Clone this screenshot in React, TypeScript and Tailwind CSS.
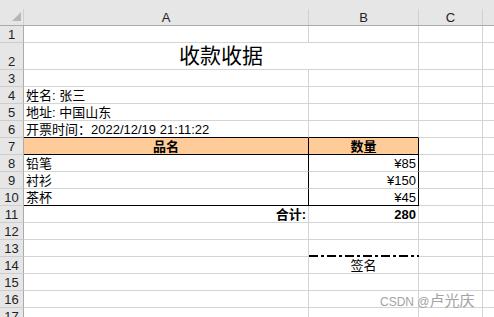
import React from 'react';

const font = { fontFamily: '"Liberation Sans", "Noto Sans CJK SC", sans-serif' };

type RowDef = {
  n: number;
  h?: string;
  a?: React.ReactNode;
  b?: React.ReactNode;
  aCls?: string;
  bCls?: string;
  merged?: boolean;
};

const DashDot = () => (
  <svg width="110" height="2" className="block shrink-0">
    <line x1="0" y1="1" x2="110" y2="1" stroke="#000" strokeWidth="2" strokeDasharray="9 3 3 3" />
  </svg>
);

const rows: RowDef[] = [
  { n: 1 },
  {
    n: 2,
    h: 'h-[27px]',
    merged: true,
    a: <span className="text-[21px] leading-[24px]">收款收据</span>,
  },
  { n: 3 },
  { n: 4, a: <span>姓名: 张三</span> },
  { n: 5, a: <span>地址: 中国山东</span> },
  {
    n: 6,
    a: <span>开票时间：2022/12/19 21:11:22</span>,
    aCls: 'border-b-black',
    bCls: 'border-b-black',
  },
  {
    n: 7,
    a: <span className="font-bold">品名</span>,
    b: <span className="font-bold">数量</span>,
    aCls: 'justify-center bg-[#ffcc99] border-r-black border-b-black',
    bCls: 'justify-center bg-[#ffcc99] border-r-black border-b-black',
  },
  { n: 8, a: <span>铅笔</span>, b: <span>¥85</span>, aCls: 'border-r-black', bCls: 'justify-end border-r-black' },
  { n: 9, a: <span>衬衫</span>, b: <span>¥150</span>, aCls: 'border-r-black', bCls: 'justify-end border-r-black' },
  {
    n: 10,
    a: <span>茶杯</span>,
    b: <span>¥45</span>,
    aCls: 'border-r-black border-b-black',
    bCls: 'justify-end border-r-black border-b-black',
  },
  {
    n: 11,
    a: <span className="font-bold">合计:</span>,
    b: <span className="font-bold">280</span>,
    aCls: 'justify-end',
    bCls: 'justify-end',
  },
  { n: 12 },
  { n: 13, bCls: 'border-b-0 !flex-col !items-stretch !px-0', b: <><div className="flex-1" /><DashDot /></> },
  { n: 14, b: <span>签名</span>, bCls: 'justify-center' },
  { n: 15 },
  { n: 16 },
  { n: 17 },
];

function SheetRow({ r }: { r: RowDef }) {
  const h = r.h ?? 'h-[17px]';
  return (
    <div className={`flex ${h} shrink-0`}>
      <div className="w-[24px] shrink-0 flex items-end justify-center border-r border-b border-r-[#ababab] border-b-[#cdcdcd] bg-[#e6e6e6] text-[13px] leading-[15px] text-[#222]">
        {r.n}
      </div>
      {r.merged ? (
        <div className="w-[395px] shrink-0 flex items-end justify-center border-r border-b border-[#d4d4d4] pb-[1px]">
          {r.a}
        </div>
      ) : (
        <>
          <div
            className={`w-[285px] shrink-0 flex items-end px-[2px] border-r border-b border-[#d4d4d4] text-[13px] leading-[15px] ${r.aCls ?? ''}`}
          >
            {r.a}
          </div>
          <div
            className={`w-[110px] shrink-0 flex items-end px-[2px] border-r border-b border-[#d4d4d4] text-[13px] leading-[15px] ${r.bCls ?? ''}`}
          >
            {r.b}
          </div>
        </>
      )}
      <div className="w-[64px] shrink-0 border-r border-b border-[#d4d4d4]" />
      <div className="flex-1 border-b border-[#d4d4d4]" />
    </div>
  );
}

export default function App() {
  return (
    <div className="relative w-[494px] h-[317px] overflow-hidden bg-white text-black" style={font}>
      {/* column headers */}
      <div className="flex h-[26px] border-b border-[#ababab] bg-[#e6e6e6] text-[13px] text-[#222]">
        <div className="w-[24px] shrink-0 flex flex-col">
          <div className="h-[9px]" />
          <div className="flex-1 border-r border-[#d0d0d0] relative">
            <svg width="10" height="10" className="absolute left-[12px] top-[3px]">
              <polygon points="9,0 9,9 0,9" fill="#b5b5b5" />
            </svg>
          </div>
        </div>
        {[
          { l: 'A', w: 'w-[285px]' },
          { l: 'B', w: 'w-[110px]' },
          { l: 'C', w: 'w-[64px]' },
        ].map((c) => (
          <div key={c.l} className={`${c.w} shrink-0 flex flex-col`}>
            <div className="h-[9px]" />
            <div className="flex-1 flex items-center justify-center border-r border-[#d0d0d0] leading-[15px]">
              {c.l}
            </div>
          </div>
        ))}
        <div className="flex-1" />
      </div>

      {rows.map((r) => (
        <SheetRow key={r.n} r={r} />
      ))}

      <div className="absolute left-[380px] top-[293px] flex items-baseline text-[#a3a3a3]">
        <span className="text-[12px] leading-[16px]">CSDN @</span>
        <span className="text-[15px] leading-[16px]">卢光庆</span>
      </div>
    </div>
  );
}
